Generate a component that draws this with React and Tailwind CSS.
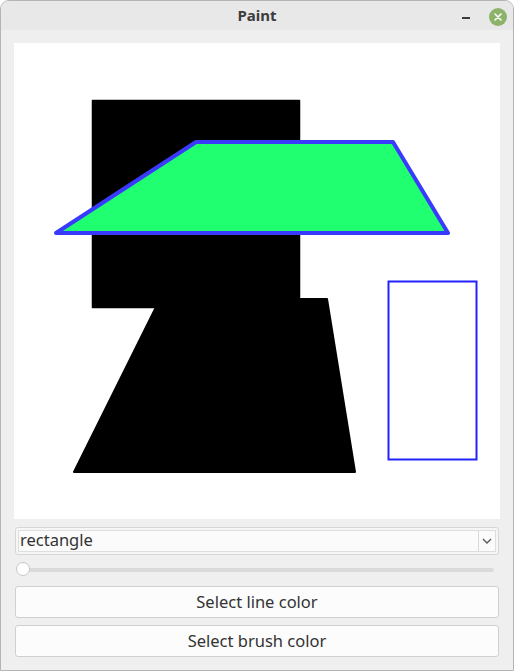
import { useState } from 'react';

function TitleBar() {
  return (
    <div className="relative h-[29px] bg-[#e8e8e8] rounded-t-[8px] flex items-center justify-center">
      <span className="text-[15px] font-bold text-[#3c3c3c]">Paint</span>
      <span className="absolute left-[461px] top-[16px] w-[8px] h-[1.5px] bg-[#3c3c3c]" />
      <span className="absolute left-[488px] top-[7px] w-[18px] h-[18px] rounded-full bg-[#8cb369] flex items-center justify-center">
        <svg width="10" height="10" viewBox="0 0 10 10">
          <path d="M2 2 L8 8 M8 2 L2 8" stroke="#ffffff" strokeWidth="1.6" strokeLinecap="round" />
        </svg>
      </span>
    </div>
  );
}

function Canvas() {
  // shapes drawn by the user, coordinates relative to canvas
  return (
    <div className="bg-white h-[476px] w-[486px]">
      <svg width="486" height="476" viewBox="0 0 486 476">
        <rect x="78.5" y="57.5" width="207" height="207" fill="#000" stroke="#000" strokeWidth="1.5" strokeLinejoin="round" />
        <polygon points="146,256 313,256 341,429 60,429" fill="#000" stroke="#000" strokeWidth="2" strokeLinejoin="round" />
        <polygon points="42,190 182,99 379,99 434,190" fill="#20ff70" stroke="#3a3aff" strokeWidth="4" strokeLinejoin="round" />
        <rect x="374.5" y="238.5" width="88" height="178" fill="none" stroke="#2222ff" strokeWidth="2" />
      </svg>
    </div>
  );
}

export default function App() {
  const [shape] = useState('rectangle');
  return (
    <div className="w-[514px] h-[671px] border border-[#b4b4b4] rounded-t-[9px] bg-[#efefef] flex flex-col" style={{ fontFamily: '"Noto Sans", "Open Sans", sans-serif' }}>
      <TitleBar />
      <div className="flex flex-col px-[13px] pt-[13px]">
        <Canvas />
        <div className="mt-[8px] mx-[1px] h-[28px] border border-[#d6d6d6] rounded-[3px] p-[2px] bg-[#f6f6f6]">
          <div className="h-full border border-[#dedede] bg-[#fafbfa] flex items-center">
            <span className="flex-1 pl-[1px] text-[16.5px] leading-none text-[#333] -mt-[1px]">{shape}</span>
            <span className="w-px h-full bg-[#d8d8d8]" />
            <span className="w-[16px] flex justify-center">
              <svg width="10" height="6" viewBox="0 0 10 6">
                <path d="M1 1 L5 5 L9 1" fill="none" stroke="#555" strokeWidth="1.3" />
              </svg>
            </span>
          </div>
        </div>
        <div className="relative h-[24px] flex items-center mx-[2px] mt-[3px]">
          <div className="h-[4px] w-[477px] ml-[1px] rounded-full bg-[#dadada]" />
          <div className="absolute left-0 top-[4px] w-[14px] h-[14px] rounded-full bg-white border border-[#c8c8c8]" />
        </div>
        <button className="mt-[4px] mx-[1px] h-[32px] border border-[#d0d0d0] rounded-[3px] bg-[#fbfcfb] text-[16.5px] text-[#333]">
          Select line color
        </button>
        <button className="mt-[7px] mx-[1px] h-[32px] border border-[#d0d0d0] rounded-[3px] bg-[#fbfcfb] text-[16.5px] text-[#333]">
          Select brush color
        </button>
      </div>
    </div>
  );
}
